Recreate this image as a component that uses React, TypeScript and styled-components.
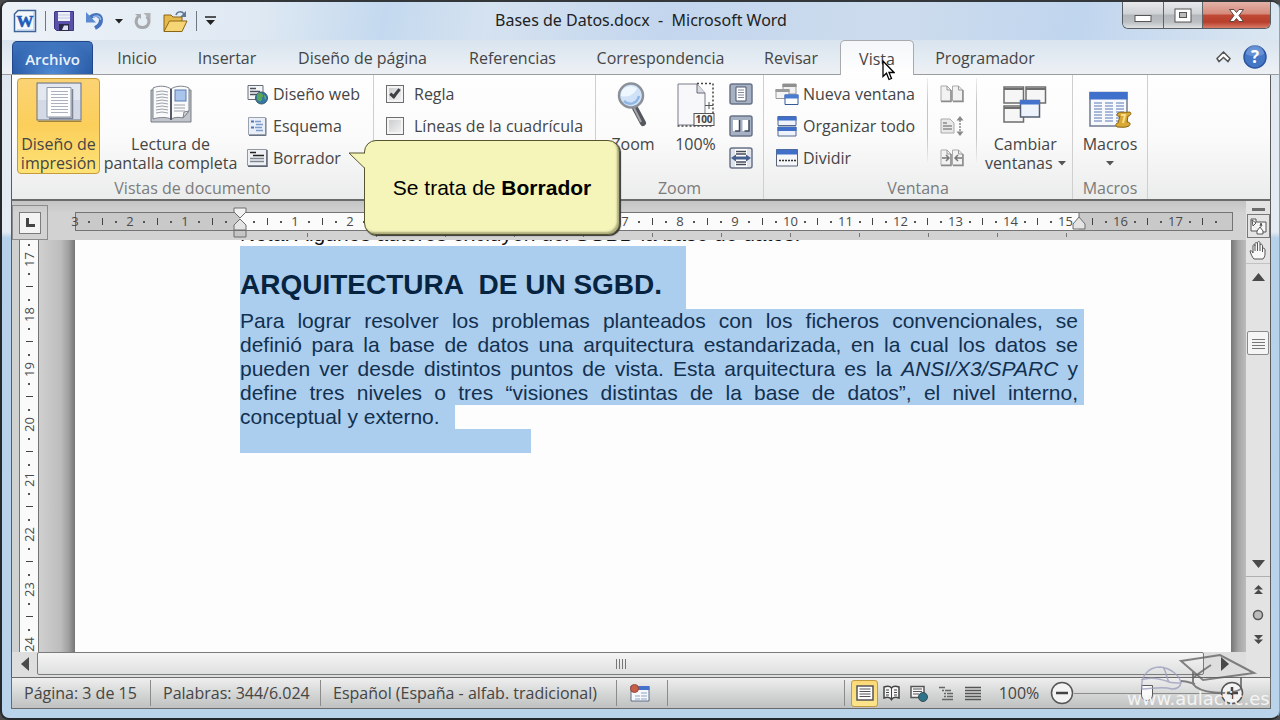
import React from "react";
import styled, { createGlobalStyle } from "styled-components";

const ui = '"Open Sans", "Noto Sans", sans-serif';
const doc = '"Liberation Sans", Arial, sans-serif';

const GlobalStyle = createGlobalStyle`
  *, *::before, *::after { box-sizing: border-box; }
  body { margin: 0; background: #4a4a4a; }
  button { font: inherit; color: inherit; background: none; border: 0; padding: 0; margin: 0; }
  svg { display: block; flex: none; }
`;

/* ---------- window frame ---------- */

const Frame = styled.div`
  position: relative;
  display: flex;
  flex-direction: column;
  min-height: 100vh;
  overflow: hidden;
  padding: 0 8px 9px 9px;
  border: 2px solid #26292c;
  border-top-color: #33373a;
  border-right-width: 1px;
  border-right-color: #8aa4ba;
  border-radius: 9px;
  background: linear-gradient(#dfe9f4 0, #d3e0ee 30px, #e2e9f0 90px, #e4ebf2 230px, #b6d1ea 236px, #b9d3eb 100%);
  font: 16px/20px ${ui};
  color: #454545;
`;

const TitleBar = styled.header`
  display: grid;
  grid-template-columns: 1fr auto 1fr;
  height: 38px;
  margin: 0 -8px 0 -9px;
  padding: 0 8px 0 9px;
  background: linear-gradient(100deg, #edf2f7 0, #dfe9f3 20%, #c4d9ef 30%, #d5e2f0 38%, #c3d6ee 52%, #cddced 70%, #c0d5ee 84%, #dbe7f2 100%);
`;

const QuickAccess = styled.div`
  display: flex;
  align-items: center;
  padding-left: 2px;
  gap: 8px;
`;

const QuickGroup = styled.div`
  display: flex;
  align-items: center;
  gap: 11px;
`;

const QuickButton = styled.button`
  display: flex;
  align-items: center;
`;

const Divider = styled.span`
  width: 1px;
  height: 20px;
  background: #6f7880;
`;

const Title = styled.h1`
  margin: 0;
  padding-top: 8px;
  font: 400 16px/20px "Noto Sans", sans-serif;
  white-space: pre;
  color: #222;
`;

const Controls = styled.div`
  justify-self: end;
  display: flex;
  height: 27px;
  border: 1px solid #565d63;
  border-top: 0;
  border-radius: 0 0 6px 6px;
  overflow: hidden;
`;

const Control = styled.button<{ $w: number; $close?: boolean }>`
  display: flex;
  align-items: center;
  justify-content: center;
  width: ${(p) => p.$w}px;
  border-left: 1px solid #5d646a;
  background: ${(p) =>
    p.$close
      ? "linear-gradient(#e3b3a8 0, #d5897a 12px, #c04a36 13px, #b73f2c 20px, #d97c68 100%)"
      : "linear-gradient(#e7e9eb 0, #cfd2d5 12px, #b3b6ba 13px, #bcbfc2 20px, #dfe1e3 100%)"};
  &:first-child { border-left: 0; }
`;

/* ---------- tabs ---------- */

const TabRow = styled.nav`
  display: flex;
  align-items: flex-end;
  height: 35px;
  margin: 0 -8px 0 -9px;
  padding: 0 8px 0 10px;
  background: linear-gradient(#d9e4ef, #edf1f5);
  border-bottom: 1px solid #9a9da0;
`;

const Tab = styled.button<{ $w: number; $kind?: "file" | "active" }>`
  flex: none;
  width: ${(p) => p.$w}px;
  height: ${(p) => (p.$kind === "file" ? 33 : 34)}px;
  padding-top: 2px;
  white-space: nowrap;
  ${(p) =>
    p.$kind === "file" &&
    `color: #e9f1fb; font-size: 15px; font-weight: 600; border: 1px solid #21478a; border-bottom: 0;
     border-radius: 5px 5px 0 0; margin-right: 4px;
     background: radial-gradient(ellipse at 50% 100%, #4f8ad4, transparent 75%), linear-gradient(#3f74bd, #2656a3);`}
  ${(p) =>
    p.$kind === "active" &&
    `background: linear-gradient(#f4f6f9, #fff); border: 1px solid #a8aaad; border-bottom: 0;
     border-radius: 5px 5px 0 0; margin: 0 2px -1px 2px; height: 35px;`}
`;

const TabTools = styled.div`
  display: flex;
  align-items: center;
  gap: 12px;
  height: 34px;
  margin-left: auto;
  padding-right: 4px;
`;

/* ---------- ribbon ---------- */

const Ribbon = styled.section`
  display: flex;
  height: 126px;
  border: 1px solid #5b5b5b;
  border-top: 0;
  border-bottom: 2px solid #6a6a6a;
  background: linear-gradient(#fefefe 0, #fbfbfb 60px, #ebecec 100%);
`;

const Group = styled.div<{ $w: number }>`
  display: flex;
  flex-direction: column;
  flex: none;
  width: ${(p) => p.$w}px;
  padding-top: 3px;
  border-right: 1px solid #cfcfcf;
`;

const GroupBody = styled.div<{ $pad?: number; $gap?: number }>`
  display: flex;
  height: 100px;
  padding-left: ${(p) => p.$pad ?? 0}px;
  gap: ${(p) => p.$gap ?? 0}px;
`;

const Caption = styled.div`
  text-align: center;
  line-height: 20px;
  color: #7b7b7b;
`;

const BigButton = styled.button<{ $w: number; $on?: boolean }>`
  display: flex;
  flex-direction: column;
  align-items: center;
  flex: none;
  width: ${(p) => p.$w}px;
  height: 96px;
  line-height: 19px;
  white-space: nowrap;
  border: 1px solid ${(p) => (p.$on ? "#c79a3a" : "transparent")};
  border-radius: 4px;
  background: ${(p) => (p.$on ? "linear-gradient(#fbd373, #fccf5b 50%, #fde277)" : "none")};
`;

const BigIcon = styled.span`
  display: flex;
  align-items: flex-start;
  flex: none;
  height: 56px;
  padding-top: 3px;
`;

const MenuLabel = styled.span`
  display: flex;
  align-items: center;
  gap: 5px;
  min-height: 19px;
`;

const Stack = styled.div<{ $pad?: number }>`
  display: flex;
  flex-direction: column;
  padding-left: ${(p) => p.$pad ?? 0}px;
`;

const SmallButton = styled.button`
  display: flex;
  align-items: center;
  gap: 5px;
  height: 32px;
  white-space: nowrap;
`;

const SmallIcon = styled.span`
  display: flex;
  justify-content: center;
  width: 22px;
`;

const Check = styled.label`
  display: flex;
  align-items: center;
  gap: 10px;
  height: 32px;
  white-space: nowrap;
  input {
    appearance: none;
    position: relative;
    width: 18px;
    height: 18px;
    margin: 0;
    border: 1px solid #6e6e6e;
    background: linear-gradient(135deg, #c6c8cb, #f6f6f6);
    box-shadow: inset 0 0 0 2px #f4f4f4;
  }
  input:checked::after {
    content: "";
    position: absolute;
    left: 5px;
    top: 1px;
    width: 6px;
    height: 11px;
    border: solid #3d3f45;
    border-width: 0 3px 3px 0;
    transform: rotate(38deg);
  }
`;

const InnerLine = styled.span`
  width: 1px;
  height: 84px;
  background: linear-gradient(#eee, #c4c4c4 30%, #c4c4c4 70%, #eee);
`;

/* ---------- workspace ---------- */

const Workspace = styled.main`
  display: flex;
  flex: 1;
  border: 1px solid #5b5b5b;
  border-width: 0 1px;
  background: #cfd0d0;
`;

const Main = styled.div`
  display: flex;
  flex-direction: column;
  flex: 1;
  min-width: 0;
`;

const RulerRow = styled.div`
  display: flex;
  height: 39px;
  background: linear-gradient(#c3c4c4, #d2d2d2 12px, #d2d2d2);
`;

const TabStop = styled.button`
  display: flex;
  align-items: center;
  justify-content: center;
  width: 36px;
  height: 35px;
  margin-top: 4px;
  border: 1px solid #8b8b8b;
  span {
    display: flex;
    align-items: center;
    justify-content: center;
    width: 22px;
    height: 22px;
    border: 1px solid #7c7c7c;
    background: #f3f3f3;
  }
`;

const RulerTrack = styled.div`
  position: relative;
  flex: 1;
  margin: 11px 13px 0 27px;
`;

const RulerBar = styled.div`
  height: 19px;
  border: 1px solid #747474;
  background: linear-gradient(to right, #c9c9c9 164px, #fbfbfb 164px 1003px, #c9c9c9 1003px);
`;

const RulerMarks = styled.div`
  display: flex;
  height: 17px;
  margin-left: -8px;
`;

const RulerCell = styled.div`
  display: grid;
  grid-template-columns: repeat(4, 1fr);
  flex: none;
  width: 55px;
  place-items: center;
  font: 13px/17px ${ui};
  color: #4a4a4a;
  b { font-weight: 400; white-space: nowrap; }
`;

const TabTicks = styled.div`
  height: 4px;
  margin: 2px 150px 0 164px;
  background: repeating-linear-gradient(to right, transparent 0 68px, #777 68px 69px);
`;

const Dot = styled.i`
  width: 2px;
  height: 2px;
  background: #555;
`;

const Bar = styled.i<{ $vertical?: boolean }>`
  width: ${(p) => (p.$vertical ? 7 : 1)}px;
  height: ${(p) => (p.$vertical ? 1 : 7)}px;
  background: #444;
`;

const Marker = styled.span<{ $x: number; $y: number }>`
  position: absolute;
  left: ${(p) => p.$x}px;
  top: ${(p) => p.$y}px;
`;

const DocRow = styled.div`
  display: flex;
  flex: 1 0 412px;
  height: 412px;
  overflow: hidden;
`;

const SideRuler = styled.div`
  flex: none;
  width: 20px;
  margin-left: 7px;
  overflow: hidden;
  border: 1px solid #747474;
  border-width: 0 1px;
  background: #fafafa;
  > div:first-child { margin-top: -44px; }
`;

const SideCell = styled.div`
  display: grid;
  grid-template-rows: repeat(4, 1fr);
  height: 55px;
  place-items: center;
  font: 13px/15px ${ui};
  color: #4a4a4a;
  b { font-weight: 400; writing-mode: vertical-rl; transform: rotate(180deg); height: 16px; }
`;

const LeftGutter = styled.div`
  flex: none;
  width: 36px;
  background: linear-gradient(to right, #d0d0d0, #bdbdbd 60%, #a0a0a0 82%, #757575);
`;

const RightGutter = styled.div`
  flex: none;
  width: 15px;
  background: linear-gradient(to right, #757575, #a5a5a5 50%, #bcbcbc);
`;

const Page = styled.article`
  flex: 1;
  min-width: 0;
  padding-left: 165px;
  overflow: hidden;
  background: #fdfdfd;
  font: 21px/24px ${doc};
  color: #12304f;
`;

const ClippedLine = styled.p`
  height: 24px;
  margin: -18px 0 0;
  color: #111;
`;

const Heading = styled.h2`
  width: 446px;
  height: 63px;
  margin: 0;
  padding-top: 14px;
  background: #abcdee;
  font: 700 28px/50px ${doc};
  white-space: pre;
  color: #06243f;
`;

const Line = styled.span<{ $w?: number }>`
  display: block;
  width: ${(p) => p.$w ?? 844}px;
  height: 24px;
  padding-right: 6px;
  background: #abcdee;
  white-space: nowrap;
  text-align-last: ${(p) => (p.$w ? "left" : "justify")};
`;

const Paragraph = styled.p`
  margin: 0;
`;

/* ---------- scroll bars ---------- */

const HScroll = styled.div`
  display: flex;
  align-items: center;
  height: 25px;
  background: #dedede;
  padding-bottom: 2px;
`;

const ArrowBox = styled.button<{ $w: number }>`
  display: flex;
  align-items: center;
  justify-content: center;
  width: ${(p) => p.$w}px;
  height: 100%;
`;

const HThumb = styled.div`
  display: flex;
  align-items: center;
  justify-content: center;
  flex: 1;
  height: 23px;
  border: 1px solid #7b7b7b;
  border-radius: 2px;
  background: linear-gradient(#f5f5f5, #dedfdf);
`;

const VScroll = styled.aside`
  display: flex;
  flex-direction: column;
  align-items: center;
  width: 24px;
  background: #e3e3e3;
`;

const SplitHandle = styled.div`
  width: 13px;
  height: 3px;
  margin-top: 7px;
  background: #6c6c6c;
`;

const RulerToggle = styled.button`
  display: flex;
  align-items: center;
  justify-content: center;
  width: 23px;
  height: 24px;
  margin-top: 3px;
  border: 1px solid #777;
  background: #e4e4e4;
`;

const PanButton = styled.button`
  display: flex;
  align-items: center;
  justify-content: center;
  width: 100%;
  height: 26px;
  border-bottom: 1px solid #c2c2c2;
`;

const VTrack = styled.div`
  display: flex;
  flex-direction: column;
  align-items: center;
  flex: 1;
  width: 100%;
  border-bottom: 1px solid #b0b0b0;
`;

const VArrow = styled.button`
  display: flex;
  align-items: center;
  justify-content: center;
  width: 100%;
  height: 25px;
`;

const VThumb = styled.div`
  display: flex;
  align-items: center;
  justify-content: center;
  width: 22px;
  height: 24px;
  margin: 42px 0 auto;
  border: 1px solid #8a8a8a;
  border-radius: 2px;
  background: #f5f5f5;
`;

const BrowseButtons = styled.div`
  display: flex;
  flex-direction: column;
  height: 100px;
`;

/* ---------- status bar ---------- */

const StatusBar = styled.footer`
  display: flex;
  align-items: center;
  height: 32px;
  border: 1px solid #6b6b6b;
  background: linear-gradient(#efefef, #d6d7d7 50%, #bfc0c0);
`;

const Status = styled.button<{ $w: number }>`
  display: flex;
  align-items: center;
  width: ${(p) => p.$w}px;
  height: 26px;
  padding-left: 12px;
  white-space: nowrap;
  border-right: 1px solid #8b8b8b;
`;

const Views = styled.div`
  display: flex;
  align-items: center;
  margin-left: auto;
  height: 26px;
  padding-left: 6px;
  border-left: 1px solid #8b8b8b;
`;

const ViewButton = styled.button<{ $on?: boolean }>`
  display: flex;
  align-items: center;
  justify-content: center;
  width: 27px;
  height: 27px;
  border: 1px solid ${(p) => (p.$on ? "#c29a3f" : "transparent")};
  border-radius: 3px;
  background: ${(p) => (p.$on ? "linear-gradient(#fbd978, #fce48b)" : "none")};
`;

const ZoomLabel = styled.button`
  width: 50px;
  margin-left: 8px;
  text-align: center;
`;

const RoundButton = styled.button`
  display: flex;
  margin-left: 6px;
`;

const ZoomSlider = styled.input`
  appearance: none;
  width: 146px;
  height: 20px;
  margin: 0;
  background: linear-gradient(#8d8d8d, #8d8d8d) center / 100% 1px no-repeat;
  &::-webkit-slider-thumb {
    appearance: none;
    width: 12px;
    height: 16px;
    border: 1px solid #5a5a5a;
    border-radius: 0 0 6px 6px;
    background: #fafafa;
  }
`;

const PlusButton = styled.button`
  display: flex;
  margin-right: 26px;
`;

/* ---------- overlays ---------- */

const Callout = styled.div`
  position: absolute;
  left: 362px;
  top: 138px;
  width: 256px;
  height: 95px;
  display: flex;
  align-items: center;
  justify-content: center;
  border: 1px solid #55552f;
  border-radius: 12px;
  background: #f5f5b9;
  box-shadow: 1px 1px 1px #333, inset -2px -2px 2px #a9a97c;
  font: 21px/24px ${doc};
  white-space: pre;
  color: #000;
  svg { position: absolute; left: -17px; top: 11px; }
`;

const Pointer = styled.span`
  position: absolute;
  left: 880px;
  top: 58px;
`;

const Watermark = styled.div`
  position: absolute;
  right: 2px;
  bottom: 2px;
  width: 154px;
  height: 66px;
  pointer-events: none;
  span {
    position: absolute;
    left: 4px;
    top: 38px;
    font: 18px/22px "DejaVu Sans", sans-serif;
    color: #f4f4f4;
    white-space: nowrap;
  }
`;

/* ---------- icons ---------- */

const WordLogo = () => (
  <svg width="24" height="24" viewBox="0 0 24 24">
    <path d="M5 1.5h17.5v21H1.5V5z" fill="#f4f8fd" stroke="#3d6497" strokeWidth="1.5" />
    <path d="M4 21h17V3" fill="none" stroke="#a9c2e4" />
    <text x="12" y="18" textAnchor="middle" fontFamily="Liberation Serif" fontWeight="700" fontSize="17" fill="#1f5bb8" stroke="#1f5bb8" strokeWidth=".6">W</text>
  </svg>
);

const SaveIcon = () => (
  <svg width="20" height="20" viewBox="0 0 20 20">
    <path d="M1 .5h18.500v19H2.500L.5 17.500V1z" fill="#5a52a8" stroke="#3d3684" />
    <path d="M4 1h12v9H4z" fill="#eef0fa" />
    <path d="M4 4h12M4 7h12" stroke="#c3c7e2" />
    <path d="M5 13h10v7H5z" fill="#2c2a4a" />
    <path d="M10 14.500h4V19H8z" fill="#dfe2f2" />
  </svg>
);

const UndoIcon = () => (
  <svg width="19" height="20" viewBox="0 0 19 20">
    <path d="M5 6.500c5-4 11-3 11 2.500 0 4-2 6-6 8" fill="none" stroke="#4673bd" strokeWidth="4" />
    <path d="M1 1v10.500h10z" fill="#5c8ad0" />
    <path d="M8 6c4-2 7.500-1 7.500 3" fill="none" stroke="#95b8e6" strokeWidth="1.500" />
  </svg>
);

const RedoIcon = () => (
  <svg width="18" height="18" viewBox="0 0 18 18">
    <path d="M5 3.500c-5 5-3 12 3.500 12S17 8 12.500 4.500" fill="none" stroke="#a6a8ab" strokeWidth="3" />
    <path d="M9.500 1h7v7z" fill="#b0b2b5" />
    <path d="M1 2h6v5z" fill="#aaacaf" />
  </svg>
);

const OpenIcon = () => (
  <svg width="25" height="23" viewBox="0 0 25 23">
    <path d="M1 21V5h7l2 2h9v5" fill="#e5b94c" stroke="#8a6516" />
    <path d="M1 21.500L6.500 11H24l-5 10.500z" fill="#f6d574" stroke="#8a6516" />
    <path d="M13 5c1-4 6-4 8-1" fill="none" stroke="#5e7896" strokeWidth="1.500" />
    <path d="M23 1v6h-6z" fill="#5e7896" />
  </svg>
);

const Caret = ({ c = "#222" }: { c?: string }) => (
  <svg width="8" height="5" viewBox="0 0 8 5"><path d="M0 0h8L4 4.500z" fill={c} /></svg>
);

const PrintIcon = () => (
  <svg width="46" height="40" viewBox="0 0 46 40">
    <rect x="1" y="1" width="44" height="37" fill="#d3dae6" stroke="#6b7384" />
    <path d="M2 2h42v16H2z" fill="#eef1f6" opacity=".6" />
    <path d="M11 5.500h24V35H11z" fill="#fdfdfd" stroke="#8b93a5" />
    <path d="M36.500 7v29.500H13" fill="none" stroke="#7b8394" strokeWidth="1.500" />
    {[9, 12, 15, 18, 21, 24, 27, 30].map((y) => <path key={y} d={`M15 ${y + 0.5}h17`} stroke="#aab0bc" />)}
    <path d="M2 39.500h43.500" stroke="#a08440" />
  </svg>
);

const BookIcon = () => (
  <svg width="44" height="42" viewBox="0 0 44 42">
    <path d="M2 8h3M39 8h3v32H2V8" fill="#c2c6cc" stroke="#777c85" />
    <path d="M4 6c6-3 14-2 18 1v30c-4-2-12-2-18 0zM40 6c-6-3-14-2-18 1v30c4-2 8-2 12-1l6-7z" fill="#fafafa" stroke="#7d828c" />
    <path d="M34 36l1-6 5-1z" fill="#d5d8dd" stroke="#7d828c" />
    <path d="M22 7v31" stroke="#555b66" strokeWidth="2" />
    {[10, 13, 16, 19, 22, 25, 28, 31].map((y) => <path key={y} d={`M7 ${y}q6-2 12 0`} fill="none" stroke="#9ba0aa" />)}
    <rect x="26" y="8" width="11" height="11" fill="#a9c5ec" stroke="#5a7cb5" />
    {[23, 26, 29].map((y) => <path key={y} d={`M25 ${y}h11`} stroke="#9ba0aa" />)}
  </svg>
);

const WebIcon = () => (
  <svg width="21" height="21" viewBox="0 0 21 21">
    <path d="M1 1.500h15v14H1z" fill="#f5f6f8" stroke="#666c78" />
    <path d="M3 4.500h6M3 7.500h10M3 10.500h7" stroke="#4b515d" strokeWidth="1.500" />
    <circle cx="14.500" cy="14" r="6" fill="#3377a8" stroke="#35586b" />
    <path d="M10 11c2-3 5-2 6 0s-2 2-1 4-3 4-5 0z" fill="#5aa653" />
    <path d="M17 11c2 1 3 3 1 5z" fill="#69b55f" />
  </svg>
);

const OutlineIcon = () => (
  <svg width="19" height="19" viewBox="0 0 19 19">
    <path d="M.5.5h17v17H.5z" fill="#e9eef7" stroke="#9aa2b1" />
    <path d="M18 1v17.500H1" fill="none" stroke="#6b7280" />
    <path d="M3 4.500h3M3 10.500h3" stroke="#4c74b8" strokeWidth="2" />
    <path d="M7 4.500h6M8 7.500h7M7 10.500h7M8 13.500h7" stroke="#7d9bcd" strokeWidth="1.500" />
  </svg>
);

const DraftIcon = () => (
  <svg width="21" height="18" viewBox="0 0 21 18">
    <path d="M.5.5h19v16H.5z" fill="#eef0f4" stroke="#9298a4" />
    <path d="M20 1v16.500H1" fill="none" stroke="#5e6572" strokeWidth="1.500" />
    <path d="M3 3.500h6M6 6.500h11" stroke="#222" strokeWidth="1.500" />
    <path d="M3 9.500h14M3 12.500h14" stroke="#7f8591" strokeWidth="1.500" />
  </svg>
);

const ZoomIcon = () => (
  <svg width="32" height="46" viewBox="0 0 32 46">
    <path d="M18 26l8 15" stroke="#55585e" strokeWidth="6" strokeLinecap="round" />
    <path d="M17 26l7 14" stroke="#a3a6ab" strokeWidth="2" />
    <circle cx="14" cy="13.500" r="12" fill="#cfe2f7" stroke="#8b9099" strokeWidth="2.500" />
    <path d="M4 14C4 5 12 2 20 6c-2 6-8 10-16 8z" fill="#f5faff" opacity=".85" />
    <path d="M7 19c5 5 13 3 15-5" fill="none" stroke="#8fb7e6" strokeWidth="2.500" />
  </svg>
);

const Hundred = () => (
  <svg width="40" height="46" viewBox="0 0 40 46">
    <path d="M2 2h19l8 9v32H2z" fill="#f8f8fa" stroke="#777c86" />
    <path d="M21 2v9h8" fill="#d8dbe1" stroke="#666b75" />
    <path d="M21 1.500h16V44H1" fill="none" stroke="#444" strokeWidth="1.500" strokeDasharray="2 2" />
    <path d="M29 23.500h8M33 20v7" stroke="#555" />
    <rect x="18" y="31.500" width="20" height="12" fill="#f7f7f7" stroke="#555" />
    <text x="28" y="41" textAnchor="middle" fontFamily="Open Sans" fontWeight="700" fontSize="10" fill="#444">100</text>
  </svg>
);

const PageFit = ({ kind }: { kind: "one" | "two" | "wide" }) => (
  <svg width="24" height="22" viewBox="0 0 24 22">
    <rect x="1" y="1" width="22" height="20" rx="2" fill={kind === "wide" ? "#dfe4ec" : "#a7b1c4"} stroke="#6a7386" strokeWidth="1.500" />
    {kind === "one" && <><path d="M7 4h10v14H7z" fill="#fff" stroke="#4d566a" /><path d="M9 7h6M9 9.500h6M9 12h6M9 14.500h6" stroke="#8189a0" /></>}
    {kind === "two" && <><path d="M4 5h6.500v11H4zM13.500 5H20v11h-6.500z" fill="#fff" /><path d="M10.500 5v11H6M20 5v11h-4.500" fill="none" stroke="#3f485c" strokeWidth="1.500" /></>}
    {kind === "wide" && <><path d="M6 2h12v18H6z" fill="#fff" /><path d="M7 4.500h10M7 17.500h10M7 7h10M7 15h10" stroke="#444b5a" strokeWidth="1.500" /><path d="M2 11l5-3.500v2h10v-2l5 3.500-5 3.500v-2H7v2z" fill="#46618f" /></>}
  </svg>
);

const NewWindowIcon = () => (
  <svg width="24" height="22" viewBox="1 0 24 22">
    <path d="M9 1h13v10H9z" fill="#f0f0f0" stroke="#999" /><path d="M8.500 1h14v3h-14z" fill="#8f8f8f" />
    <path d="M2 6.500h13v9H2z" fill="#f5f5f5" stroke="#999" /><path d="M1.500 6h14v3h-14z" fill="#9b9b9b" />
    <path d="M11 12h13v9.500H11z" fill="#fff" stroke="#365a9a" /><path d="M10.500 11.500h14v4h-14z" fill="#4a7bd0" />
  </svg>
);

const ArrangeIcon = () => (
  <svg width="20" height="21" viewBox="0 0 20 21">
    {[0.5, 11].map((y) => (
      <g key={y}><path d={`M1 ${y}h18v9H1z`} fill="#eef3fb" stroke="#54698f" /><path d={`M.5 ${y}h19v4H.5z`} fill="#3f6fc8" /></g>
    ))}
  </svg>
);

const SplitIcon = () => (
  <svg width="22" height="18" viewBox="0 0 22 18">
    <path d="M.5.5h21v16.500H.5z" fill="#f6f7fa" stroke="#5a6478" /><path d="M.5.5h21v5H.5z" fill="#3f6fc8" />
    <path d="M3 11.500h17" stroke="#333" strokeWidth="1.500" strokeDasharray="2 1" />
  </svg>
);

const SideIcon = ({ kind }: { kind: "side" | "sync" | "reset" }) => (
  <svg width="24" height="20" viewBox="0 0 24 20">
    {kind === "sync" ? (
      <>
        <path d="M1 3h9l4 4v10H1z" fill="#e9e9e9" stroke="#aaa" />
        <path d="M3 7h4M3 10h9M3 13h9" stroke="#8c8c8c" strokeWidth="1.500" />
        <path d="M20 4v12" stroke="#888" strokeWidth="1.500" strokeDasharray="2 1" />
        <path d="M16.500 4.500L20 0l3.500 4.500zM16.500 15.500L20 20l3.500-4.500z" fill="#888" />
      </>
    ) : (
      <>
        <path d="M1 2h6l4 4v11H1zM12.500 2h6l4 4v11h-10z" fill="#f2f2f2" stroke="#aaa" />
        <path d="M7 2v4h4M18.500 2v4h4" fill="none" stroke="#999" />
        <path d="M11 6v11.500H1M23 6v11.500H13" fill="none" stroke="#8b8b8b" strokeWidth="1.500" />
        {kind === "reset" && <path d="M2 10h7M6 7l3 3-3 3M22 10h-7M18 7l-3 3 3 3" fill="none" stroke="#777" strokeWidth="1.500" />}
      </>
    )}
  </svg>
);

const SwitchIcon = () => (
  <svg width="44" height="42" viewBox="0 -4 44 42">
    {[[1, 1], [23, 1], [1, 20]].map(([x, y]) => (
      <g key={`${x}-${y}`}><path d={`M${x} ${y}h19.500v16H${x}z`} fill="#f6f6f6" stroke="#6e6e6e" strokeWidth="1.500" /><path d={`M${x} ${y + 2}h19`} stroke="#6e6e6e" strokeWidth="2" /></g>
    ))}
    <path d="M17.500 14.500h19V31h-19z" fill="#edf2fb" stroke="#555f72" strokeWidth="1.500" /><path d="M17 14h20v4.500H17z" fill="#4272cc" />
  </svg>
);

const MacroIcon = () => (
  <svg width="44" height="48" viewBox="0 -9 44 48">
    <path d="M2 1.500h37V35H2z" fill="#f8f9fc" stroke="#6f7b92" strokeWidth="1.500" /><path d="M1.500 1h38v7.500h-38z" fill="#3e70cc" />
    {[12, 15, 18, 21, 24, 27, 30].map((y) => <path key={y} d={`M6 ${y}h8M17 ${y}h8M28 ${y}h8`} stroke="#8da3cb" strokeWidth="1.500" />)}
    <path d="M29 23c3-3 6-1 13-2 2 2 0 4-2 4l-1 6c3 0 4 2 2 4-4 2-8 1-12 1-2-2-1-4 1-4l2-7c-2 1-3 0-3-2z" fill="#d9a936" stroke="#8b6410" />
    <path d="M33 24h4l-2 8" fill="none" stroke="#f8df8d" strokeWidth="2" />
  </svg>
);

const HelpIcon = () => (
  <svg width="24" height="24" viewBox="0 0 24 24">
    <circle cx="12" cy="12" r="11" fill="#4476c6" stroke="#2b559f" strokeWidth="1.500" />
    <path d="M3 9a9 9 0 0118 0c-5 3-13 3-18 0z" fill="#7fa5e0" opacity=".6" />
    <text x="12" y="18" textAnchor="middle" fontFamily="Open Sans" fontWeight="700" fontSize="17" fill="#fff">?</text>
  </svg>
);

const Tri = ({ d, w = 13, h = 8 }: { d: string; w?: number; h?: number }) => (
  <svg width={w} height={h} viewBox={`0 0 ${w} ${h}`}><path d={d} fill="#4a4a4a" /></svg>
);

const Lines = ({ w = 16, outline = false }: { w?: number; outline?: boolean }) => (
  <svg width={w} height="15" viewBox={`0 0 ${w} 15`}>
    {outline
      ? <path d="M1 1.500h6M4 4.500h2M7 4.500h6M6 7.500h2M9 7.500h6M6 10.500h2M9 10.500h6M4 13.500h11" stroke="#666" strokeWidth="1.500" />
      : <path d={`M0 1.500h${w}M0 4.500h${w}M0 7.500h${w}M0 10.500h${w}M0 13.500h${w}`} stroke="#555" strokeWidth="1.500" />}
  </svg>
);

const Round = ({ plus = false }: { plus?: boolean }) => (
  <svg width="24" height="24" viewBox="0 0 24 24">
    <circle cx="12" cy="12" r="10.500" fill="#f3f3f3" stroke="#555" strokeWidth="1.500" />
    <path d={plus ? "M6 12h12M12 6v12" : "M6 12h12"} stroke="#444" strokeWidth="2.500" />
  </svg>
);

/* ---------- data ---------- */

const tabs: { name: string; w: number; kind?: "file" | "active" }[] = [
  { name: "Archivo", w: 81, kind: "file" },
  { name: "Inicio", w: 80 },
  { name: "Insertar", w: 100 },
  { name: "Diseño de página", w: 171 },
  { name: "Referencias", w: 129 },
  { name: "Correspondencia", w: 167 },
  { name: "Revisar", w: 94 },
  { name: "Vista", w: 74, kind: "active" },
  { name: "Programador", w: 138 },
];

/* Numbers under the callout are left blank. */
const rulerNumbers = ["3", "2", "1", "", "1", "2", "", "", "", "", "7", "8", "9", "10", "11", "12", "13", "14", "15", "16", "17"];
const sideNumbers = ["", "17", "18", "19", "20", "21", "22", "23", "24"];

export default function App() {
  return (
    <>
      <GlobalStyle />
      <Frame>
        <TitleBar>
          <QuickAccess>
            <WordLogo />
            <Divider />
            <QuickGroup>
              <QuickButton aria-label="Guardar"><SaveIcon /></QuickButton>
              <QuickButton aria-label="Deshacer"><UndoIcon /></QuickButton>
              <QuickButton aria-label="Opciones de deshacer"><Caret /></QuickButton>
              <QuickButton aria-label="Rehacer"><RedoIcon /></QuickButton>
              <QuickButton aria-label="Abrir"><OpenIcon /></QuickButton>
            </QuickGroup>
            <Divider />
            <QuickButton aria-label="Personalizar">
              <svg width="11" height="10" viewBox="0 0 11 10"><path d="M0 1h11" stroke="#222" strokeWidth="1.500" /><path d="M1 4h9L5.500 9z" fill="#222" /></svg>
            </QuickButton>
          </QuickAccess>
          <Title>{"Bases de Datos.docx  -  Microsoft Word"}</Title>
          <Controls>
            <Control $w={40} aria-label="Minimizar"><svg width="18" height="18" viewBox="0 0 18 18"><rect x="1" y="9.500" width="16" height="6" fill="#fff" stroke="#555" /></svg></Control>
            <Control $w={39} aria-label="Maximizar"><svg width="18" height="15" viewBox="0 0 18 15"><rect x="1" y="1" width="16" height="13" fill="#fff" stroke="#555" /><rect x="5.500" y="4.500" width="7" height="5" fill="#bbb" stroke="#555" /></svg></Control>
            <Control $w={68} $close aria-label="Cerrar"><svg width="17" height="15" viewBox="0 0 17 15"><path d="M1.500 1.500h4.500l2.500 3 2.500-3h4.500l-4.500 6 4.500 6H11l-2.500-3-2.500 3H1.500l4.500-6z" fill="#fff" stroke="#5d4542" /></svg></Control>
          </Controls>
        </TitleBar>

        <TabRow>
          {tabs.map((t) => <Tab key={t.name} $w={t.w} $kind={t.kind}>{t.name}</Tab>)}
          <TabTools>
            <QuickButton aria-label="Minimizar la cinta"><svg width="15" height="12" viewBox="0 0 15 12"><path d="M1 7.500L7.500 1 14 7.500l-2 3-4.500-4-4.500 4z" fill="#fff" stroke="#555" strokeWidth="1.500" /></svg></QuickButton>
            <QuickButton aria-label="Ayuda"><HelpIcon /></QuickButton>
          </TabTools>
        </TabRow>

        <Ribbon>
          <Group $w={362}>
            <GroupBody $pad={5}>
              <BigButton $w={83} $on><BigIcon><PrintIcon /></BigIcon><span>Diseño de</span><span>impresión</span></BigButton>
              <BigButton $w={141}><BigIcon><BookIcon /></BigIcon><span>Lectura de</span><span>pantalla completa</span></BigButton>
              <Stack $pad={5}>
                <SmallButton><SmallIcon><WebIcon /></SmallIcon>Diseño web</SmallButton>
                <SmallButton><SmallIcon><OutlineIcon /></SmallIcon>Esquema</SmallButton>
                <SmallButton><SmallIcon><DraftIcon /></SmallIcon>Borrador</SmallButton>
              </Stack>
            </GroupBody>
            <Caption>Vistas de documento</Caption>
          </Group>
          <Group $w={222}>
            <GroupBody $pad={12}>
              <Stack>
                <Check><input type="checkbox" defaultChecked />Regla</Check>
                <Check><input type="checkbox" />Líneas de la cuadrícula</Check>
              </Stack>
            </GroupBody>
          </Group>
          <Group $w={168}>
            <GroupBody $pad={8}>
              <BigButton $w={58}><BigIcon><ZoomIcon /></BigIcon><span>Zoom</span></BigButton>
              <BigButton $w={67}><BigIcon><Hundred /></BigIcon><span>100%</span></BigButton>
              <Stack>
                <SmallButton aria-label="Una página"><PageFit kind="one" /></SmallButton>
                <SmallButton aria-label="Dos páginas"><PageFit kind="two" /></SmallButton>
                <SmallButton aria-label="Ancho de página"><PageFit kind="wide" /></SmallButton>
              </Stack>
            </GroupBody>
            <Caption>Zoom</Caption>
          </Group>
          <Group $w={309}>
            <GroupBody $pad={12} $gap={12}>
              <Stack>
                <SmallButton><SmallIcon><NewWindowIcon /></SmallIcon>Nueva ventana</SmallButton>
                <SmallButton><SmallIcon><ArrangeIcon /></SmallIcon>Organizar todo</SmallButton>
                <SmallButton><SmallIcon><SplitIcon /></SmallIcon>Dividir</SmallButton>
              </Stack>
              <InnerLine />
              <Stack>
                <SmallButton aria-label="Ver en paralelo"><SideIcon kind="side" /></SmallButton>
                <SmallButton aria-label="Desplazamiento sincrónico"><SideIcon kind="sync" /></SmallButton>
                <SmallButton aria-label="Restablecer posición"><SideIcon kind="reset" /></SmallButton>
              </Stack>
              <InnerLine />
              <BigButton $w={72}><BigIcon><SwitchIcon /></BigIcon><span>Cambiar</span><MenuLabel>ventanas <Caret c="#555" /></MenuLabel></BigButton>
            </GroupBody>
            <Caption>Ventana</Caption>
          </Group>
          <Group $w={75}>
            <GroupBody>
              <BigButton $w={74}><BigIcon><MacroIcon /></BigIcon><span>Macros</span><MenuLabel><Caret c="#555" /></MenuLabel></BigButton>
            </GroupBody>
            <Caption>Macros</Caption>
          </Group>
        </Ribbon>

        <Workspace>
          <Main>
            <RulerRow>
              <TabStop aria-label="Tabulación izquierda"><span><svg width="9" height="9" viewBox="0 0 9 9"><path d="M1.500 0v7.500H9" fill="none" stroke="#444" strokeWidth="3" /></svg></span></TabStop>
              <RulerTrack>
                <RulerBar>
                  <RulerMarks>
                    {rulerNumbers.map((n, i) => <RulerCell key={i}><b>{n}</b><Dot /><Bar /><Dot /></RulerCell>)}
                  </RulerMarks>
                </RulerBar>
                <TabTicks />
                <Marker $x={158} $y={-5}>
                  <svg width="14" height="32" viewBox="0 0 14 32">
                    <path d="M1 1h12v4l-6 6-6-6z" fill="#f2f2f2" stroke="#6d6d6d" />
                    <path d="M7 12l6 6v5H1v-5z" fill="#e4e4e4" stroke="#6d6d6d" />
                    <path d="M1 23.500h12v6.500H1z" fill="#c6c6c6" stroke="#6d6d6d" />
                  </svg>
                </Marker>
                <Marker $x={997} $y={0}>
                  <svg width="14" height="18" viewBox="0 0 14 18"><path d="M7 1v4l6 7v5H1v-5l6-7" fill="#e4e4e4" stroke="#6d6d6d" /></svg>
                </Marker>
              </RulerTrack>
            </RulerRow>

            <DocRow>
              <SideRuler>
                {sideNumbers.map((n) => <SideCell key={n}><b>{n}</b><Dot /><Bar $vertical /><Dot /></SideCell>)}
              </SideRuler>
              <LeftGutter />
              <Page>
                <ClippedLine>Nota: Algunos autores excluyen del SGBD la base de datos.</ClippedLine>
                <Heading>{"ARQUITECTURA  DE UN SGBD."}</Heading>
                <Paragraph>
                  <Line>Para lograr resolver los problemas planteados con los ficheros convencionales, se</Line>
                  <Line>definió para la base de datos una arquitectura estandarizada, en la cual los datos se</Line>
                  <Line>pueden ver desde distintos puntos de vista. Esta arquitectura es la <em>ANSI/X3/SPARC</em> y</Line>
                  <Line>define tres niveles o tres “visiones distintas de la base de datos”, el nivel interno,</Line>
                  <Line $w={215}>conceptual y externo.</Line>
                  <Line $w={291} />
                </Paragraph>
              </Page>
              <RightGutter />
            </DocRow>

            <HScroll>
              <ArrowBox $w={25} aria-label="Izquierda"><Tri w={8} h={14} d="M8 0v14L0 7z" /></ArrowBox>
              <HThumb><svg width="11" height="10" viewBox="0 0 11 10"><path d="M1.500 0v10M4.500 0v10M7.500 0v10M10.500 0v10" stroke="#777" /></svg></HThumb>
              <ArrowBox $w={42} aria-label="Derecha"><Tri w={8} h={14} d="M0 0v14l8-7z" /></ArrowBox>
            </HScroll>
          </Main>

          <VScroll>
            <SplitHandle />
            <RulerToggle aria-label="Regla"><svg width="19" height="18" viewBox="0 0 19 18"><path d="M2 7V2h5v3h10v10h-3M2 7v7h8" fill="#f6f6f6" stroke="#555" /><path d="M3 3l4 3-3 3zM12 6l-1 3h2zM8 17v-3l3-4 3 4v3z" fill="#fff" stroke="#555" /></svg></RulerToggle>
            <PanButton aria-label="Mano">
              <svg width="18" height="20" viewBox="0 0 18 20"><path d="M5 18c-2-2-3-5-4-8 1-1 2 0 3 2V5c0-2 2-2 2 0V3c0-2 2-2 2.500 0V2c0-2 2.500-2 2.500 0v2c.5-1.500 2.500-1 2.500 1v3c.5-1.500 2.500-1 2.500 1v4c0 2-1 4-2 5z" fill="#f8f8f8" stroke="#555" /><path d="M6 5v5M8.500 3v7M11 4v6M13.500 7v4" stroke="#555" /></svg>
            </PanButton>
            <VTrack>
              <VArrow aria-label="Arriba"><Tri d="M0 8h13L6.500 0z" /></VArrow>
              <VThumb><svg width="13" height="11" viewBox="0 0 13 11"><path d="M0 1.500h13M0 4.500h13M0 7.500h13M0 10.500h13" stroke="#777" /></svg></VThumb>
              <VArrow aria-label="Abajo"><Tri d="M0 0h13L6.500 8z" /></VArrow>
            </VTrack>
            <BrowseButtons>
              <VArrow aria-label="Página anterior"><Tri w={9} h={9} d="M0 4.500h9L4.500 0zM0 9h9L4.500 4.500z" /></VArrow>
              <VArrow aria-label="Examinar"><svg width="12" height="12" viewBox="0 0 12 12"><circle cx="6" cy="6" r="4.500" fill="#bbb" stroke="#555" strokeWidth="1.500" /></svg></VArrow>
              <VArrow aria-label="Página siguiente"><Tri w={9} h={9} d="M0 0h9L4.500 4.500zM0 4.500h9L4.500 9z" /></VArrow>
            </BrowseButtons>
          </VScroll>
        </Workspace>

        <StatusBar>
          <Status $w={139}>Página: 3 de 15</Status>
          <Status $w={170}>Palabras: 344/6.024</Status>
          <Status $w={296}>Español (España - alfab. tradicional)</Status>
          <Status $w={51} aria-label="Grabar macro">
            <svg width="22" height="20" viewBox="0 0 22 20"><path d="M2 3.500h18V18H2z" fill="#f7f8fb" stroke="#5f6c86" /><path d="M1.500 3h19v4h-19z" fill="#4272cc" /><path d="M12 10h6M6 13h5M12 13h6M6 16h5M12 16h6" stroke="#8da3cb" /><circle cx="5.500" cy="5.500" r="4" fill="#c4604a" stroke="#9c4433" /></svg>
          </Status>
          <Views>
            <ViewButton $on aria-label="Diseño de impresión"><svg width="18" height="16" viewBox="0 0 18 16"><path d="M1 1h16v14H1z" fill="#fff" stroke="#555" strokeWidth="1.500" /><path d="M3.500 4h11M3.500 6.500h11M3.500 9h11M3.500 11.500h11" stroke="#555" /></svg></ViewButton>
            <ViewButton aria-label="Lectura"><svg width="17" height="16" viewBox="0 0 17 16"><path d="M1 2c3-1 6-1 7.500 1C10 1 13 1 16 2v11c-3-1-6-1-7.500 1.500C7 12 4 12 1 13z" fill="#f5f5f5" stroke="#444" strokeWidth="1.500" /><path d="M8.500 3v12M3 5h3M3 7.500h3M3 10h3M11 5h3M11 7.500h3M11 10h3" stroke="#444" /></svg></ViewButton>
            <ViewButton aria-label="Diseño web"><svg width="18" height="17" viewBox="0 0 18 17"><path d="M1 1.500h13v11H1z" fill="#f7f7f7" stroke="#555" strokeWidth="1.500" /><path d="M3 4h9M3 6.500h9M3 9h6" stroke="#555" /><circle cx="13" cy="12" r="4.500" fill="#2f7388" stroke="#36505a" /></svg></ViewButton>
            <ViewButton aria-label="Esquema"><Lines outline /></ViewButton>
            <ViewButton aria-label="Borrador"><Lines /></ViewButton>
          </Views>
          <ZoomLabel>100%</ZoomLabel>
          <RoundButton aria-label="Alejar"><Round /></RoundButton>
          <ZoomSlider type="range" min={0} max={100} defaultValue={50} aria-label="Zoom" />
          <PlusButton aria-label="Acercar"><Round plus /></PlusButton>
        </StatusBar>

        <Callout>
          <svg width="18" height="20" viewBox="0 0 18 20"><path d="M18 1H1l17 16z" fill="#f5f5b9" /><path d="M17 1H1l16 15.500" fill="none" stroke="#55552f" /></svg>
          <span>Se trata de <strong>Borrador</strong></span>
        </Callout>
        <Pointer>
          <svg width="13" height="21" viewBox="0 0 13 21"><path d="M1 1v15.500l3.500-3.300L7 19.500l2.500-1-2.500-6h5z" fill="#fff" stroke="#000" strokeWidth="1.300" /></svg>
        </Pointer>
        <Watermark>
          <svg width="154" height="66" viewBox="0 0 154 66">
            <path d="M19 39c-2-13 7-22 18-22 11 1 20 9 21 16-1 5-5 6-9 6-10-3-20 0-30 0zM40 17c4 5 3 11 6 15M18 30c8-3 18-2 28 2 4 1 8 1 12 1" fill="none" stroke="#9c9fbe" strokeWidth="1.500" opacity=".8" />
            <path d="M58 11l39-6 34 18-51 7zM58 31c6 0 10 2 14 3M70 22v12c6 9 36 12 48 5V27M88 15c-6 4-12 8-18 13" fill="none" stroke="#5c5c5c" strokeWidth="2" opacity=".75" />
          </svg>
          <span>www.aulaclic.es</span>
        </Watermark>
      </Frame>
    </>
  );
}
